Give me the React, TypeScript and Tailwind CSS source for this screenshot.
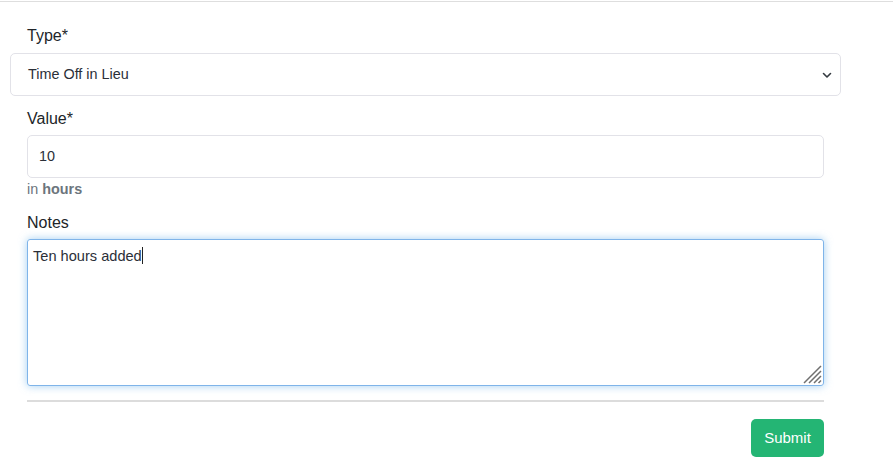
import React from "react";

export default function App() {
  return (
    <div className="min-h-[473px] w-[893px] bg-white pt-px font-['Liberation_Sans',Arial,sans-serif] text-[#212529]">
      <div className="h-px w-full bg-[#dedede]" />
      <div className="w-[797px] ml-[27px] pt-[22px]">
        <div className="h-6 text-base leading-6">Type*</div>
        <div className="mt-[5px] -ml-[17px] flex h-[43px] w-[831px] items-center justify-between rounded-[5px] border border-[#e2e2e8] pl-[17px] pr-[6px] text-[14.4px] text-[#2b2f38]">
          <span>Time Off in Lieu</span>
          <svg width="12" height="12" viewBox="0 0 12 12" className="mr-[1px]">
            <path d="M2.5 4.5 L6 8 L9.5 4.5" fill="none" stroke="#343a40" strokeWidth="1.6" strokeLinecap="round" strokeLinejoin="round" />
          </svg>
        </div>
        <div className="mt-[11px] h-6 text-base leading-6">Value*</div>
        <div className="mt-[4px] flex h-[43px] w-full items-center rounded-[5px] border border-[#e2e2e8] px-[11px] text-[14.4px] text-[#2b2f38]">
          10
        </div>
        <div className="h-5 pt-px text-[14.4px] leading-5 text-[#6c757d]">
          in <b className="font-bold">hours</b>
        </div>
        <div className="mt-[13px] h-6 text-base leading-6">Notes</div>
        <div className="relative mt-[4px] h-[147px] w-full rounded-[3px] border border-[#7fb4e9] px-[5px] pt-[4px] text-[14.6px] leading-5 text-[#2b2f38] shadow-[0_0_8px_rgba(102,175,233,0.6)]">
          <span>Ten hours added</span>
          <span className="inline-block h-[17px] w-px translate-y-[3px] bg-[#222]" />
          <svg className="absolute bottom-[1px] right-[1px]" width="19" height="19" viewBox="0 0 19 19">
            <path d="M18 1 L1 18 M18 6 L6 18 M18 11 L11 18 M18 15.5 L15.5 18" stroke="#707070" strokeWidth="1.5" />
          </svg>
        </div>
        <div className="mt-[14px] h-[2px] w-full bg-[#dcdcdc]" />
        <div className="mt-[17px] flex justify-end">
          <button className="h-[38px] w-[73px] rounded-[5px] bg-[#24b574] text-[15px] text-white">
            Submit
          </button>
        </div>
      </div>
    </div>
  );
}
